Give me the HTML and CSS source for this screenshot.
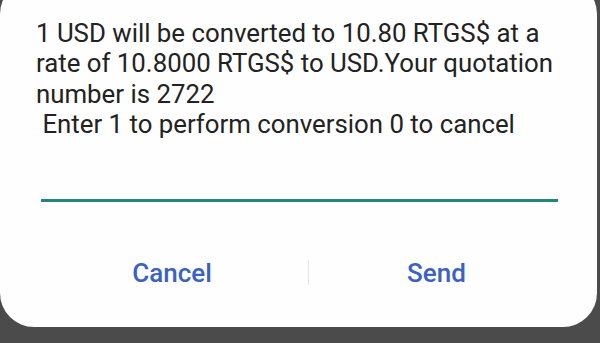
FILE: index.html
```html
<!DOCTYPE html>
<html lang="en">
<head>
    <meta charset="UTF-8">
    <meta name="viewport" content="width=device-width, initial-scale=1.0">
    <title>USSD Message</title>
    <link rel="stylesheet" href="styles.css">
</head>
<body>
    <div class="dialog">
        <p class="message">1 USD will be converted to 10.80 RTGS$ at a rate of 10.8000 RTGS$ to USD.Your quotation number is 2722<br>&nbsp;Enter 1 to perform conversion 0 to cancel</p>

        <div class="field"></div>

        <div class="actions">
            <button class="action">Cancel</button>
            <span class="divider"></span>
            <button class="action">Send</button>
        </div>
    </div>
</body>
</html>
```

FILE: styles.css
```css
html, body {
    margin: 0;
    height: 100%;
    overflow: hidden;
}
body {
    font-family: Roboto, "Noto Sans", sans-serif;
    background: #4b4b4b;
}
.dialog {
    box-sizing: border-box;
    width: 597px;
    height: 347px;
    margin-top: -20px;
    padding: 38px 36px 0 36px;
    background: #fefefe;
    border-radius: 34px;
}
.message {
    margin: 0;
    font-size: 25.8px;
    line-height: 30.4px;
    color: #222;
}
.field {
    margin: 59px 3px 0 5px;
    border-bottom: 3px solid #24857a;
}
.actions {
    display: grid;
    grid-template-columns: 272px 1px 1fr;
    align-items: center;
    margin: 56px -3px 0 0;
    height: 26px;
}
.action {
    background: none;
    border: none;
    padding: 0;
    font-family: inherit;
    font-size: 26px;
    font-weight: 500;
    line-height: 30px;
    color: #3b62c2;
    text-align: center;
}
.divider {
    height: 25px;
    background: #e4e4e4;
}
```
